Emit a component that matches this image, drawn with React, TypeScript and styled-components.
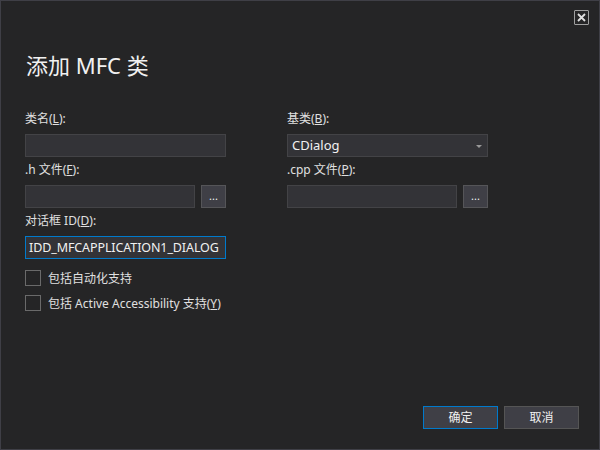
import styled, { createGlobalStyle } from "styled-components";

const GlobalStyle = createGlobalStyle`
    html, body {
        margin: 0;
        padding: 0;
        background: #252526;
    }
    * {
        box-sizing: border-box;
    }
`

const FONT = `"Noto Sans", "Noto Sans CJK SC", sans-serif`

export default function App() {
    return (
        <>
            <GlobalStyle />
            <Dialog>
                <CloseRow>
                    <CloseButton aria-label="关闭">
                        <svg width="9" height="9" viewBox="0 0 9 9">
                            <path d="M1 1 L8 8 M8 1 L1 8" stroke="#e0e0e0" strokeWidth="1.8" />
                        </svg>
                    </CloseButton>
                </CloseRow>

                <Title>添加 MFC 类</Title>

                <Form>
                    <Field>
                        <Label>类名(<u>L</u>):</Label>
                        <TextBox />
                    </Field>
                    <Field>
                        <Label>基类(<u>B</u>):</Label>
                        <Combo>
                            <span>CDialog</span>
                            <Arrow />
                        </Combo>
                    </Field>
                    <Field>
                        <Label>.h 文件(<u>F</u>):</Label>
                        <InputRow>
                            <TextBox />
                            <Browse>...</Browse>
                        </InputRow>
                    </Field>
                    <Field>
                        <Label>.cpp 文件(<u>P</u>):</Label>
                        <InputRow>
                            <TextBox />
                            <Browse>...</Browse>
                        </InputRow>
                    </Field>
                    <Field>
                        <Label>对话框 ID(<u>D</u>):</Label>
                        <TextBox focused>IDD_MFCAPPLICATION1_DIALOG</TextBox>
                    </Field>
                </Form>

                <Checks>
                    <CheckRow>
                        <CheckBox />
                        <span>包括自动化支持</span>
                    </CheckRow>
                    <CheckRow>
                        <CheckBox />
                        <span>包括 Active Accessibility 支持(<u>Y</u>)</span>
                    </CheckRow>
                </Checks>

                <Footer>
                    <DialogButton primary>确定</DialogButton>
                    <DialogButton>取消</DialogButton>
                </Footer>
            </Dialog>
        </>
    )
}

const Dialog = styled.div`
    width: 600px;
    height: 450px;
    border: 1px solid #3f3f46;
    background: #252526;
    display: flex;
    flex-direction: column;
    padding: 0 20px 20px 24px;
    font-family: ${FONT};
    color: #e2e2e2;
    overflow: hidden;
`

const CloseRow = styled.div`
    display: flex;
    justify-content: flex-end;
    padding-top: 9px;
    margin-right: -10px;
`

const CloseButton = styled.div`
    width: 15px;
    height: 15px;
    border: 1px solid #a0a0a0;
    border-radius: 1px;
    display: flex;
    align-items: center;
    justify-content: center;
`

const Title = styled.h1`
    margin: 25px 0 0 1px;
    font-size: 22px;
    font-weight: 400;
    line-height: 30px;
    color: #f1f1f1;
`

const Form = styled.div`
    margin-top: 29px;
    display: grid;
    grid-template-columns: 201px 201px;
    column-gap: 61px;
    row-gap: 3px;
`

const Field = styled.div`
    display: flex;
    flex-direction: column;
`

const Label = styled.label`
    font-size: 12px;
    line-height: 20px;
    height: 20px;
    margin-bottom: 5px;
    color: #e0e0e0;

    u {
        text-underline-offset: 1px;
    }
`

const InputRow = styled.div`
    display: flex;
    gap: 6px;
`

const TextBox = styled.div<{ focused?: boolean }>`
    flex: 1;
    height: 23px;
    background: #333337;
    border: 1px solid ${props => props.focused ? "#007acc" : "#434346"};
    color: #f1f1f1;
    font-size: 12.5px;
    letter-spacing: -0.1px;
    line-height: 21px;
    padding: 0 3px;
    white-space: nowrap;
    overflow: hidden;
`

const Combo = styled.div`
    height: 23px;
    background: #333337;
    border: 1px solid #434346;
    color: #f1f1f1;
    font-size: 13px;
    line-height: 21px;
    padding: 0 4px;
    display: flex;
    align-items: center;
    justify-content: space-between;
`

const Arrow = styled.span`
    width: 0;
    height: 0;
    border-left: 3px solid transparent;
    border-right: 3px solid transparent;
    border-top: 3px solid #999999;
    margin-right: 1px;
    margin-top: 1px;
`

const Browse = styled.div`
    width: 25px;
    height: 23px;
    background: #3f3f46;
    border: 1px solid #555558;
    color: #f1f1f1;
    font-size: 11px;
    line-height: 19px;
    text-align: center;
`

const Checks = styled.div`
    margin-top: 9px;
    display: flex;
    flex-direction: column;
    gap: 5px;
`

const CheckRow = styled.div`
    display: flex;
    align-items: center;
    gap: 7px;
    height: 20px;
    font-size: 12px;
    color: #e0e0e0;
`

const CheckBox = styled.span`
    width: 16px;
    height: 16px;
    border: 1px solid #6a6a6a;
    background: #252526;
`

const Footer = styled.div`
    margin-top: auto;
    display: flex;
    justify-content: flex-end;
    gap: 6px;
`

const DialogButton = styled.div<{ primary?: boolean }>`
    width: 75px;
    height: 23px;
    background: #3f3f46;
    border: 1px solid ${props => props.primary ? "#007acc" : "#555555"};
    color: #f1f1f1;
    font-size: 12px;
    line-height: 21px;
    text-align: center;
`
